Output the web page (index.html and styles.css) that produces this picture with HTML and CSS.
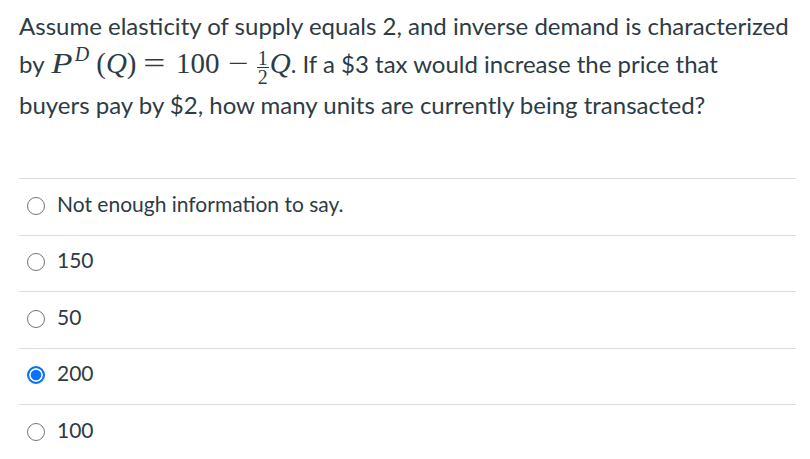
FILE: index.html
```html
<!DOCTYPE html>
<html>
<head>
<meta charset="utf-8">
<link rel="stylesheet" href="styles.css">
</head>
<body>
<div class="question">
  <p class="prompt">Assume elasticity of supply equals 2, and inverse demand is characterized by <span class="math"><i class="big">P</i><span class="sup"><i>D</i></span><span class="paren">(</span><i>Q</i>)<span class="rel">=</span>100<span class="bin">&minus;</span><span class="frac"><span class="num">1</span><span class="den">2</span></span><i>Q</i></span>. If a $3 tax would increase the price that buyers pay by $2, how many units are currently being transacted?</p>
  <div class="answers">
    <label class="answer"><input type="radio" name="a"><span class="text">Not enough information to say.</span></label>
    <label class="answer"><input type="radio" name="a"><span class="text">150</span></label>
    <label class="answer"><input type="radio" name="a"><span class="text">50</span></label>
    <label class="answer"><input type="radio" name="a" checked><span class="text">200</span></label>
    <label class="answer"><input type="radio" name="a"><span class="text">100</span></label>
  </div>
</div>
</body>
</html>
```
FILE: styles.css
```css
html, body {
  margin: 0;
  padding: 0;
  background: #fff;
}
body {
  font-family: Lato, "Liberation Sans", sans-serif;
  color: #2d3b45;
}
.question {
  padding: 7px 14px 0 19px;
}
.prompt {
  margin: 0 4px 0 0;
  font-size: 24px;
  line-height: 37.5px;
}
.math {
  font-family: "Liberation Serif", "DejaVu Serif", serif;
  font-size: 29px;
  white-space: nowrap;
}
.math i {
  font-style: italic;
}
.math .big {
  display: inline-block;
  transform: scaleX(1.2);
  margin: 0 2px 0 3px;
}
.sup {
  display: inline-block;
  font-size: 20px;
  line-height: 0;
  vertical-align: 12px;
  margin-left: 2px;
}
.paren {
  margin-left: 7px;
}
.rel {
  display: inline-block;
  transform: scaleX(1.35);
  margin: 0 14px 0 9px;
}
.bin {
  display: inline-block;
  transform: scaleX(1.25);
  margin: 0 8px 0 11px;
}
.frac {
  display: inline-block;
  vertical-align: -11px;
  font-size: 20px;
  text-align: center;
  margin: 0 1px 0 2px;
}
.num, .den {
  display: block;
  line-height: 18px;
  padding: 0 1px;
}
.num {
  border-bottom: 1px solid #2d3b45;
}
.answers {
  margin-top: 55px;
}
.answer {
  display: flex;
  align-items: center;
  gap: 12px;
  height: 55.5px;
  border-top: 1px solid #dcdcdc;
  font-size: 21px;
  padding-left: 8px;
}
.text {
  padding-bottom: 7px;
}
.answer input {
  appearance: none;
  -webkit-appearance: none;
  margin: 0 0 2px;
  width: 18px;
  height: 18px;
  border: 1.5px solid #767676;
  border-radius: 50%;
  background: #fff;
  box-sizing: border-box;
  flex: none;
}
.answer input:checked {
  border: 2px solid #0a72ff;
  background: #0a72ff;
  box-shadow: inset 0 0 0 1.7px #fff;
}
```
